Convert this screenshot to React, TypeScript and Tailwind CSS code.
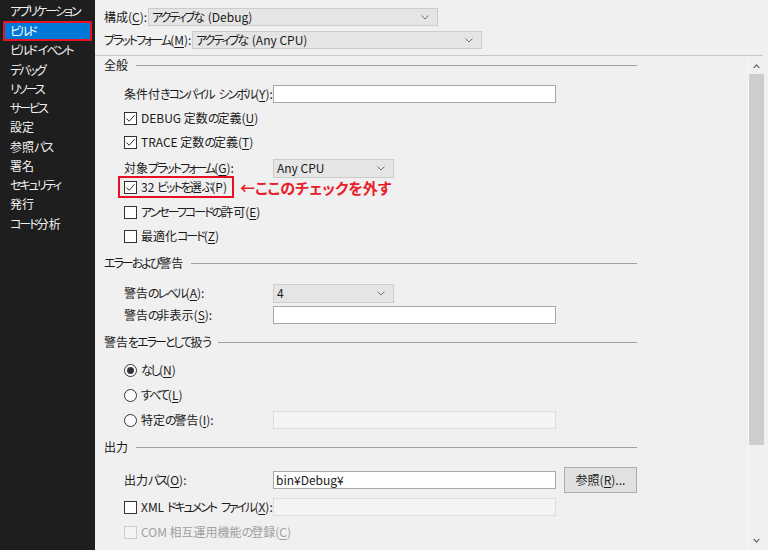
import React from 'react';

const font = `font-['Noto_Sans_CJK_JP','Noto_Sans',sans-serif] [font-feature-settings:'palt'] whitespace-nowrap`;

const navItems = [
  'アプリケーション',
  'ビルド',
  'ビルド イベント',
  'デバッグ',
  'リソース',
  'サービス',
  '設定',
  '参照パス',
  '署名',
  'セキュリティ',
  '発行',
  'コード分析',
];

function M({ children }: { children: React.ReactNode }) {
  return <u className="underline underline-offset-2 decoration-1">{children}</u>;
}

// kana runs are set tighter so the labels get close to the narrow UI font; "&X" marks the access key
function Txt({ s }: { s: string }) {
  const parts = s.split(/(&.|[\u3040-\u30ff]+)/).filter(Boolean);
  return (
    <>
      {parts.map((p, i) => {
        if (p.startsWith('&')) return <M key={i}>{p[1]}</M>;
        if (/^[\u3040-\u30ff]/.test(p)) {
          const spaced = parts[i + 1]?.startsWith(' ');
          return (
            <span key={i} className={spaced ? 'mr-[2px] tracking-[-2px]' : 'tracking-[-2px]'}>
              {p}
            </span>
          );
        }
        return <React.Fragment key={i}>{p}</React.Fragment>;
      })}
    </>
  );
}

function Check({ checked = false, disabled = false }: { checked?: boolean; disabled?: boolean }) {
  return (
    <span
      className={`flex h-[13px] w-[13px] shrink-0 items-center justify-center border ${
        disabled ? 'border-[#cccccc] bg-[#f4f4f4]' : 'border-[#333333] bg-white'
      }`}
    >
      {checked && (
        <svg width="11" height="11" viewBox="0 0 11 11">
          <polyline points="1.5,5.5 4.2,8.3 9.5,2.2" fill="none" stroke="#333" strokeWidth="1" />
        </svg>
      )}
    </span>
  );
}

function Radio({ checked = false }: { checked?: boolean }) {
  return (
    <span className="flex h-[13px] w-[13px] shrink-0 items-center justify-center rounded-full border border-[#333333] bg-white">
      {checked && <span className="h-[7px] w-[7px] rounded-full bg-[#333333]" />}
    </span>
  );
}

function Chevron() {
  return (
    <svg width="8" height="5" viewBox="0 0 8 5" className="shrink-0">
      <polyline points="0.5,0.5 4,4 7.5,0.5" fill="none" stroke="#707070" strokeWidth="1" />
    </svg>
  );
}

function Select({ value, w }: { value: string; w: string }) {
  return (
    <div className={`flex ${w} items-center justify-between border border-[#cccccc] bg-[#e5e5e5] pl-[3px] pr-[8px]`}>
      <span className="text-[12px] leading-none text-[#1b1b1b]">
        <Txt s={value} />
      </span>
      <Chevron />
    </div>
  );
}

function TextBox({ value = '', disabled = false }: { value?: string; disabled?: boolean }) {
  return (
    <div
      className={`flex h-[18px] w-[283px] shrink-0 items-center border px-[2px] text-[12px] leading-none ${
        disabled ? 'border-[#dcdcdc] bg-[#f4f4f4]' : 'border-[#a8a8a8] bg-white text-[#1b1b1b]'
      }`}
    >
      {value}
    </div>
  );
}

function Section({ title, className = '' }: { title: string; className?: string }) {
  return (
    <div className={`flex h-[18px] w-[533px] items-center ${className}`}>
      <span className="text-[12px] leading-none text-[#1b1b1b]">
        <Txt s={title} />
      </span>
      <span className="ml-[8px] h-px flex-1 bg-[#a0a0a0]" />
    </div>
  );
}

function Row({ className = '', children }: { className?: string; children: React.ReactNode }) {
  return <div className={`flex h-[20px] items-center pl-[20px] text-[12px] leading-none text-[#1b1b1b] ${className}`}>{children}</div>;
}

function Label({ s }: { s: string }) {
  return (
    <span className="w-[149px] shrink-0">
      <Txt s={s} />
    </span>
  );
}

export default function App() {
  return (
    <div className={`flex h-[550px] w-[768px] overflow-hidden bg-[#f0f0f0] ${font}`}>
      {/* left nav */}
      <nav className="flex w-[95px] shrink-0 flex-col bg-[#1e1e1e] pt-[1.5px] text-[12px] leading-none text-[#f1f1f1]">
        {navItems.map((item) =>
          item === 'ビルド' ? (
            <div
              key={item}
              className="mx-[3px] flex h-[20px] items-center border-2 border-[#e81123] bg-[#0078d7] pl-[5px] text-white"
            >
              <Txt s={item} />
            </div>
          ) : (
            <div key={item} className="flex h-[19.25px] items-center pl-[10px]">
              <Txt s={item} />
            </div>
          ),
        )}
      </nav>

      {/* main */}
      <div className="flex flex-1 flex-col">
        <div className="mr-[5px] flex h-[56px] shrink-0 flex-col gap-[5px] border-b border-[#c8c8c8] pl-[9px] pt-[8px] text-[12px] leading-none text-[#1b1b1b]">
          <div className="flex h-[18px] items-center">
            <span className="w-[44px] shrink-0">
              <Txt s="構成(&C):" />
            </span>
            <Select value="アクティブな (Debug)" w="h-[18px] w-[290px]" />
          </div>
          <div className="flex h-[18px] items-center">
            <span className="w-[88px] shrink-0">
              <Txt s="プラットフォーム(&M):" />
            </span>
            <Select value="アクティブな (Any CPU)" w="h-[18px] w-[290px]" />
          </div>
        </div>

        <div className="flex flex-1">
          <div className="flex flex-1 flex-col pl-[9px]">
            <Section title="全般" />
            <Row className="mt-[10px]">
              <Label s="条件付きコンパイル シンボル(&Y):" />
              <TextBox />
            </Row>
            <Row className="mt-[4px] gap-[4px]">
              <Check checked />
              <span>
                <Txt s="DEBUG 定数の定義(&U)" />
              </span>
            </Row>
            <Row className="mt-[4px] gap-[4px]">
              <Check checked />
              <span>
                <Txt s="TRACE 定数の定義(&T)" />
              </span>
            </Row>
            <Row className="mt-[6px]">
              <Label s="対象プラットフォーム(&G):" />
              <Select value="Any CPU" w="h-[19px] w-[121px]" />
            </Row>
            <Row className="-mt-px">
              <div className="-ml-[6px] flex h-[22px] items-center gap-[4px] border-2 border-[#e81123] pl-[4px] pr-[5px]">
                <Check checked />
                <span>
                  <Txt s="32 ビットを選ぶ(P)" />
                </span>
              </div>
              <span className="ml-[6px] text-[15px] font-bold text-[#e8202a]">←ここのチェックを外す</span>
            </Row>
            <Row className="mt-[5px] gap-[4px]">
              <Check />
              <span>
                <Txt s="アンセーフコードの許可(&E)" />
              </span>
            </Row>
            <Row className="mt-[4px] gap-[4px]">
              <Check />
              <span>
                <Txt s="最適化コード(&Z)" />
              </span>
            </Row>

            <Section title="エラーおよび警告" className="mt-[8px]" />
            <Row className="mt-[11px]">
              <Label s="警告のレベル(&A):" />
              <Select value="4" w="h-[19px] w-[121px]" />
            </Row>
            <Row className="mt-[2px]">
              <Label s="警告の非表示(&S):" />
              <TextBox />
            </Row>

            <Section title="警告をエラーとして扱う" className="mt-[8px]" />
            <Row className="mt-[9px] gap-[4px]">
              <Radio checked />
              <span>
                <Txt s="なし(&N)" />
              </span>
            </Row>
            <Row className="mt-[5px] gap-[4px]">
              <Radio />
              <span>
                <Txt s="すべて(&L)" />
              </span>
            </Row>
            <Row className="mt-[5px]">
              <span className="flex w-[149px] shrink-0 items-center gap-[4px]">
                <Radio />
                <span>
                  <Txt s="特定の警告(&I):" />
                </span>
              </span>
              <TextBox disabled />
            </Row>

            <Section title="出力" className="mt-[8px]" />
            <Row className="mt-[14px]">
              <Label s="出力パス(&O):" />
              <TextBox value="bin¥Debug¥" />
              <button className="ml-[8px] flex h-[26px] w-[73px] items-center justify-center border border-[#adadad] bg-[#e1e1e1] text-[12px] leading-none text-[#1b1b1b]">
                <Txt s="参照(&R)..." />
              </button>
            </Row>
            <Row className="mt-[7px]">
              <span className="flex w-[149px] shrink-0 items-center gap-[4px]">
                <Check />
                <span>
                  <Txt s="XML ドキュメント ファイル(&X):" />
                </span>
              </span>
              <TextBox disabled />
            </Row>
            <Row className="mt-[5px] gap-[4px] text-[#a0a0a0]">
              <Check disabled />
              <span>
                <Txt s="COM 相互運用機能の登録(&C)" />
              </span>
            </Row>
          </div>

          {/* scrollbar */}
          <div className="mr-[5px] mt-[2px] flex w-[15px] shrink-0 flex-col items-center border-l border-[#f8f8f8] bg-[#f0f0f0]">
            <div className="flex h-[16px] w-full items-center justify-center">
              <svg width="7" height="4" viewBox="0 0 7 4">
                <polygon points="0,4 3.5,0 7,4 5.5,4 3.5,1.8 1.5,4" fill="#606060" />
              </svg>
            </div>
            <div className="h-[371px] w-[15px] bg-[#cdcdcd]" />
            <div className="flex-1" />
            <div className="flex h-[16px] w-full items-center justify-center pb-[3px]">
              <svg width="7" height="4" viewBox="0 0 7 4">
                <polygon points="0,0 3.5,4 7,0 5.5,0 3.5,2.2 1.5,0" fill="#606060" />
              </svg>
            </div>
          </div>
        </div>
      </div>
    </div>
  );
}
